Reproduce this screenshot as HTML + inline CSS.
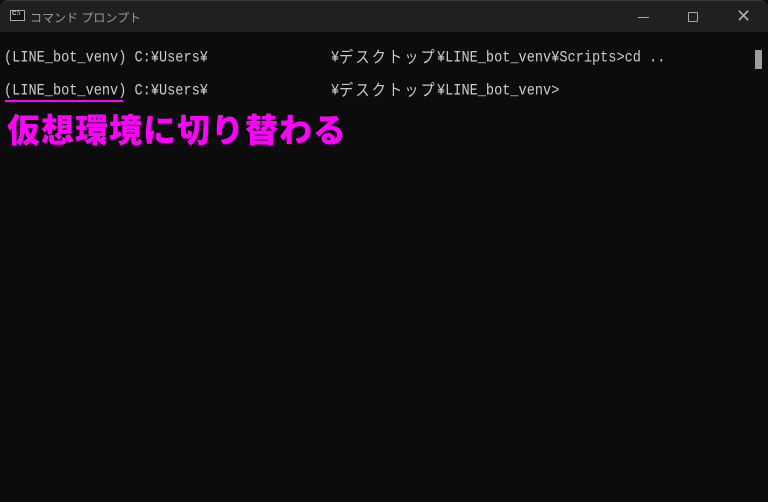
<!DOCTYPE html>
<html><head><meta charset="utf-8"><style>
html,body{margin:0;padding:0;width:768px;height:502px;overflow:hidden;background:#0c0c0c}
#title{position:absolute;left:0;top:0;width:768px;height:32px;background:#202020;border-top:1px solid #3a3a3a;box-sizing:border-box;border-radius:8px 8px 0 0}
#title .t{position:absolute;left:30px;top:8px;font:12px "Liberation Sans","Noto Sans CJK JP",sans-serif;color:#9a9a9a}
#icon{position:absolute;left:10px;top:9px;width:15px;height:11px;background:#111;border:1px solid #aaa;box-sizing:border-box}
#icon:after{content:"C:\\";position:absolute;left:1px;top:0;font:bold 6px "Liberation Sans",sans-serif;color:#ddd}
.ctl{position:absolute;top:6px;color:#bbb;font:16px "Liberation Sans",sans-serif}
.line{position:absolute;font:13.6px "Liberation Mono","Noto Sans CJK JP",monospace;color:#cccccc;white-space:pre;line-height:16px;transform:scaleY(1.15);transform-origin:0 50%}
.line .k{font-size:14px;font-family:"Noto Sans CJK JP",sans-serif;line-height:0;letter-spacing:2.3px;position:relative;top:1px}
#big{position:absolute;left:7px;top:104px;font:900 33px "Noto Sans CJK JP",sans-serif;color:#f0f;letter-spacing:1px;white-space:nowrap}
#ul{position:absolute;left:5px;top:100px;width:118px;height:2px;background:#f0f}
#sb{position:absolute;left:755px;top:50px;width:7px;height:19px;background:#9d9d9d}
</style></head><body>
<div id="title"><div id="icon"></div><div class="t">コマンド プロンプト</div>
<div style="position:absolute;left:638px;top:16px;width:11px;height:1px;background:#aaa"></div>
<div style="position:absolute;left:688px;top:11px;width:10px;height:10px;border:1px solid #aaa;box-sizing:border-box;border-radius:1px"></div>
<div class="ctl" style="left:736px;top:5px;font-size:18px;color:#aaa">✕</div>
</div>
<div class="line" style="left:4px;top:51px">(LINE_bot_venv) C:¥Users¥</div>
<div class="line" style="left:331px;top:51px">¥<span class="k">デスクトップ</span>¥LINE_bot_venv¥Scripts&gt;cd ..</div>
<div class="line" style="left:4px;top:84px">(LINE_bot_venv) C:¥Users¥</div>
<div class="line" style="left:331px;top:84px">¥<span class="k">デスクトップ</span>¥LINE_bot_venv&gt;</div>
<div id="ul"></div>
<div id="big">仮想環境に切り替わる</div>
<div id="sb"></div>
</body></html>
